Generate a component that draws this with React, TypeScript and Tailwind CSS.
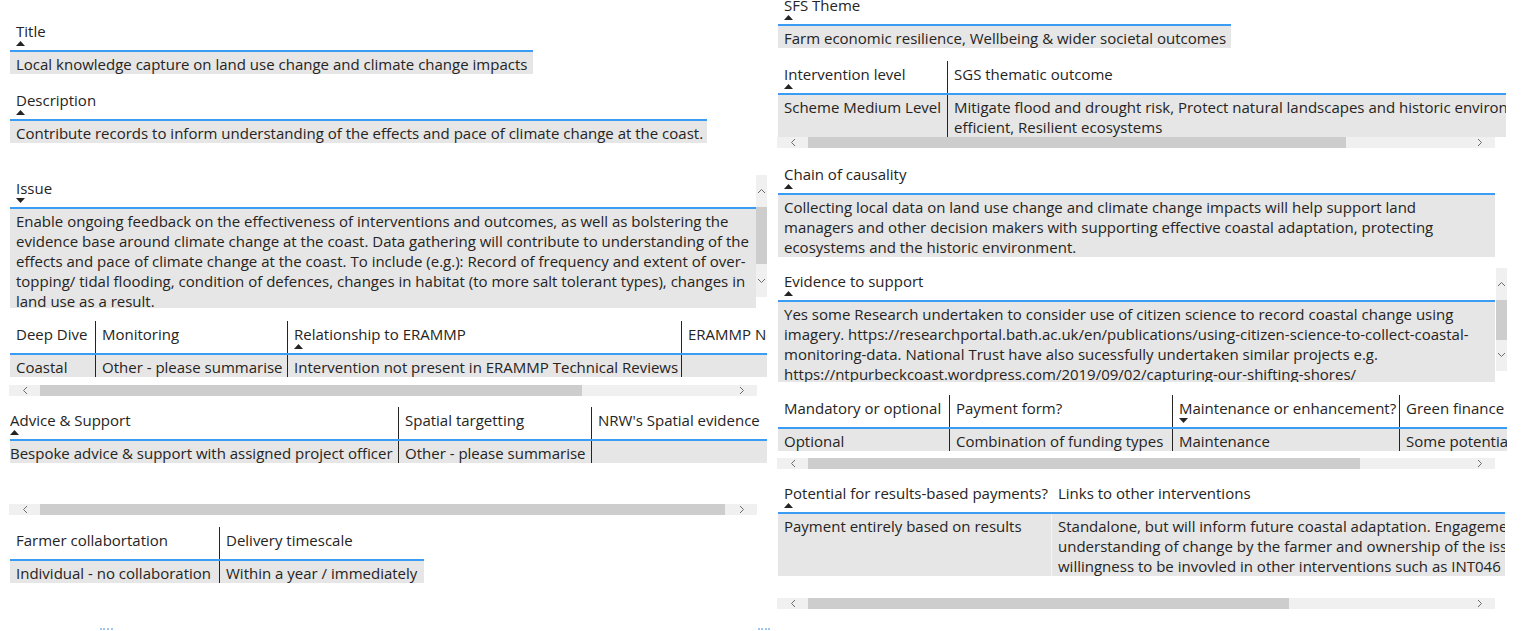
import type { ReactNode } from "react";

type Sort = "up" | "down" | null;

interface Col {
  label: string;
  width: string;
  sort?: Sort;
  flush?: boolean;
}

function SortArrow({ dir }: { dir: Sort }) {
  if (!dir) return null;
  return (
    <svg width="9" height="5" viewBox="0 0 9 5" className="block">
      <path d={dir === "up" ? "M0 5 L4.5 0 L9 5 Z" : "M0 0 L4.5 5 L9 0 Z"} fill="#252423" />
    </svg>
  );
}

function Chevron({ dir }: { dir: "left" | "right" | "up" | "down" }) {
  const d = {
    left: "M5 1 L1.5 4.5 L5 8",
    right: "M1 1 L4.5 4.5 L1 8",
    up: "M1 5 L4.5 1.5 L8 5",
    down: "M1 1 L4.5 4.5 L8 1",
  }[dir];
  const horizontal = dir === "left" || dir === "right";
  return (
    <svg
      width={horizontal ? 6 : 9}
      height={horizontal ? 9 : 6}
      viewBox={horizontal ? "0 0 6 9" : "0 0 9 6"}
      className="block"
    >
      <path d={d} fill="none" stroke="#6b6b6b" strokeWidth="1" />
    </svg>
  );
}

function HScroll({ className, thumb }: { className: string; thumb: string }) {
  return (
    <div className={`flex h-[11px] bg-[#f0f0f0] ${className}`}>
      <div className="w-[31px] flex items-center justify-center">
        <Chevron dir="left" />
      </div>
      <div className="flex-1">
        <div className={`h-full bg-[#cdcdcd] ${thumb}`} />
      </div>
      <div className="w-[31px] flex items-center justify-center">
        <Chevron dir="right" />
      </div>
    </div>
  );
}

function VScroll({ className, thumb }: { className: string; thumb: string }) {
  return (
    <div className={`flex flex-col w-[11px] shrink-0 bg-[#f0f0f0] ${className}`}>
      <div className="h-[32px] flex items-center justify-center">
        <Chevron dir="up" />
      </div>
      <div className="flex-1">
        <div className={`w-full bg-[#cdcdcd] ${thumb}`} />
      </div>
      <div className="h-[32px] flex items-center justify-center">
        <Chevron dir="down" />
      </div>
    </div>
  );
}

function Lines({ value }: { value: string | string[] }) {
  const lines = Array.isArray(value) ? value : [value];
  return (
    <>
      {lines.map((l, i) => (
        <div key={i} className="whitespace-nowrap leading-[20px]">
          {l}
        </div>
      ))}
    </>
  );
}

// one table visual: header row with sort arrows, blue rule, grey data row
function Table({
  cols,
  row,
  className,
  headSep = true,
  rowSep = "border-[#252423]",
}: {
  cols: Col[];
  row: (string | string[])[];
  className: string;
  headSep?: boolean;
  rowSep?: string;
}) {
  return (
    <div className={`overflow-hidden ${className}`}>
      <div className="flex w-max border-b-2 border-[#3a9cf5]">
        {cols.map((c, i) => (
          <div
            key={c.label}
            className={`${c.width} shrink-0 pt-[3px] ${c.flush ? "pr-[4px]" : "pl-[6px] pr-[2px]"} ${
              i > 0 && headSep ? "border-l border-[#252423]" : i > 0 ? "border-l border-transparent" : ""
            }`}
          >
            <div className="whitespace-nowrap leading-[20px]">{c.label}</div>
            <div className="h-[9px]">
              <SortArrow dir={c.sort ?? null} />
            </div>
          </div>
        ))}
      </div>
      <div className="flex w-max bg-[#e6e6e6]">
        {cols.map((c, i) => (
          <div
            key={c.label}
            className={`${c.width} shrink-0 pt-[2px] overflow-hidden ${c.flush ? "pr-[4px]" : "pl-[6px] pr-[2px]"} ${
              i > 0 ? `border-l ${rowSep}` : ""
            }`}
          >
            <Lines value={row[i]} />
          </div>
        ))}
      </div>
    </div>
  );
}

function Field({
  label,
  sort,
  value,
  className,
}: {
  label: string;
  sort: Sort;
  value: string | string[];
  className: string;
}) {
  return (
    <div className={className}>
      <div className="pt-[3px] px-[6px] border-b-2 border-[#3a9cf5]">
        <div className="leading-[20px] whitespace-nowrap">{label}</div>
        <div className="h-[9px]">
          <SortArrow dir={sort} />
        </div>
      </div>
      <div className="bg-[#e6e6e6] pl-[6px] pt-[2px]">
        <Lines value={value} />
      </div>
    </div>
  );
}

function Scrolled({ children, className, bar }: { children: ReactNode; className: string; bar: ReactNode }) {
  return (
    <div className={`flex items-start overflow-hidden ${className}`}>
      <div className="flex-1 min-w-0 h-full overflow-hidden">{children}</div>
      {bar}
    </div>
  );
}

export default function App() {
  return (
    <div className="w-[1521px] h-[631px] overflow-hidden bg-white flex text-[15px] text-[#252423] font-['Open_Sans',sans-serif]">
      {/* left half of the page */}
      <div className="w-[770px] shrink-0 flex flex-col pl-[10px]">
        <Field
          className="mt-[18px] w-[523px]"
          label="Title"
          sort="up"
          value="Local knowledge capture on land use change and climate change impacts"
        />
        <Field
          className="mt-[13px] w-[697px]"
          label="Description"
          sort="up"
          value="Contribute records to inform understanding of the effects and pace of climate change at the coast."
        />
        <Scrolled
          className="mt-[32px] h-[133px] w-[757px]"
          bar={<VScroll className="h-[122px]" thumb="h-[57px]" />}
        >
          <Field
            className="w-[746px]"
            label="Issue"
            sort="down"
            value={[
              "Enable ongoing feedback on the effectiveness of interventions and outcomes, as well as bolstering the",
              "evidence base around climate change at the coast. Data gathering will contribute to understanding of the",
              "effects and pace of climate change at the coast. To include (e.g.): Record of frequency and extent of over-",
              "topping/ tidal flooding, condition of defences, changes in habitat (to more salt tolerant types), changes in",
              "land use as a result.",
            ]}
          />
        </Scrolled>

        <Table
          className="mt-[13px] w-[757px]"
          cols={[
            { label: "Deep Dive", width: "w-[85px]" },
            { label: "Monitoring", width: "w-[192px]" },
            { label: "Relationship to ERAMMP", width: "w-[394px]", sort: "up" },
            { label: "ERAMMP Notes", width: "w-[200px]" },
          ]}
          row={["Coastal", "Other - please summarise", "Intervention not present in ERAMMP Technical Reviews", ""]}
        />
        <HScroll className="mt-[8px] w-[748px] -ml-[1px]" thumb="w-[542px]" />

        <Table
          className="mt-[11px] w-[757px]"
          cols={[
            { label: "Advice & Support", width: "w-[388px]", sort: "up", flush: true },
            { label: "Spatial targetting", width: "w-[193px]" },
            { label: "NRW's Spatial evidence", width: "w-[200px]" },
          ]}
          row={["Bespoke advice & support with assigned project officer", "Other - please summarise", ""]}
        />
        <HScroll className="mt-[41px] w-[748px] -ml-[1px]" thumb="w-[685px]" />

        <Table
          className="mt-[12px] w-[414px]"
          cols={[
            { label: "Farmer collabortation", width: "w-[209px]" },
            { label: "Delivery timescale", width: "w-[205px]" },
          ]}
          row={["Individual - no collaboration", "Within a year / immediately"]}
        />

        {/* resize grips peeking in at the bottom edge */}
        <div className="mt-auto mb-[1px] flex">
          <div className="ml-[90px] w-[18px] border-t-2 border-dotted border-[#9cc8f0]" />
          <div className="ml-[645px] w-[18px] border-t-2 border-dotted border-[#9cc8f0]" />
        </div>
      </div>

      {/* right half of the page */}
      <div className="flex-1 flex flex-col pl-[8px]">
        <Field
          className="-mt-[8px] w-[453px]"
          label="SFS Theme"
          sort="up"
          value="Farm economic resilience, Wellbeing & wider societal outcomes"
        />
        <Table
          className="mt-[13px] w-[728px]"
          cols={[
            { label: "Intervention level", width: "w-[169px]", sort: "up" },
            { label: "SGS thematic outcome", width: "w-[700px]" },
          ]}
          row={[
            "Scheme Medium Level",
            [
              "Mitigate flood and drought risk, Protect natural landscapes and historic environment, Resource",
              "efficient, Resilient ecosystems",
            ],
          ]}
        />
        <HScroll className="w-[718px] -ml-[1px]" thumb="w-[538px]" />

        <Field
          className="mt-[13px] w-[717px]"
          label="Chain of causality"
          sort="up"
          value={[
            "Collecting local data on land use change and climate change impacts will help support land",
            "managers and other decision makers with supporting effective coastal adaptation, protecting",
            "ecosystems and the historic environment.",
          ]}
        />
        <Scrolled
          className="mt-[11px] h-[114px] w-[729px]"
          bar={<VScroll className="h-[103px]" thumb="h-[40px]" />}
        >
          <Field
            className="w-[717px]"
            label="Evidence to support"
            sort="up"
            value={[
              "Yes some Research undertaken to consider use of citizen science to record coastal change using",
              "imagery. https://researchportal.bath.ac.uk/en/publications/using-citizen-science-to-collect-coastal-",
              "monitoring-data. National Trust have also sucessfully undertaken similar projects e.g.",
              "https://ntpurbeckcoast.wordpress.com/2019/09/02/capturing-our-shifting-shores/",
            ]}
          />
        </Scrolled>

        <Table
          className="mt-[13px] w-[729px]"
          cols={[
            { label: "Mandatory or optional", width: "w-[171px]" },
            { label: "Payment form?", width: "w-[223px]" },
            { label: "Maintenance or enhancement?", width: "w-[227px]", sort: "down" },
            { label: "Green finance", width: "w-[200px]" },
          ]}
          row={["Optional", "Combination of funding types", "Maintenance", "Some potential"]}
        />
        <HScroll className="mt-[7px] w-[718px] -ml-[1px]" thumb="w-[552px]" />

        <Table
          className="mt-[11px] w-[727px]"
          headSep={false}
          rowSep="border-[#f5f5f5]"
          cols={[
            { label: "Potential for results-based payments?", width: "w-[273px]", sort: "up" },
            { label: "Links to other interventions", width: "w-[700px]" },
          ]}
          row={[
            "Payment entirely based on results",
            [
              "Standalone, but will inform future coastal adaptation. Engagement with monitoring will encourage",
              "understanding of change by the farmer and ownership of the issue, and may increase",
              "willingness to be invovled in other interventions such as INT046 and INT047",
            ],
          ]}
        />
        <HScroll className="mt-[22px] w-[718px] -ml-[1px]" thumb="w-[481px]" />
      </div>
    </div>
  );
}
